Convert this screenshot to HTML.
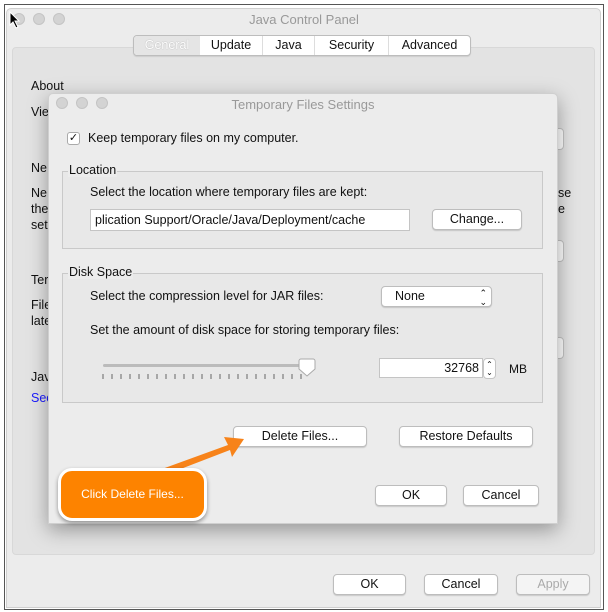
<!DOCTYPE html><html><head><style>
*{box-sizing:border-box;margin:0;padding:0}
body{width:608px;height:612px;background:#fff;font-family:"Liberation Sans",sans-serif;font-size:12.5px;color:#111;position:relative;overflow:hidden}
.a{position:absolute}
.btn{position:absolute;background:#fff;border:1px solid #bdbdbd;border-radius:4px;box-shadow:0 1px 1px rgba(0,0,0,.15);text-align:center;font-size:12.5px;line-height:19px}
.dot{position:absolute;width:12px;height:12px;border-radius:50%;background:#d3d3d3;border:1px solid #c4c4c4}
.grp{position:absolute;border:1px solid #c9c9c9;background:#e8e8e8}
</style></head><body>
<div class="a" style="left:4px;top:4px;width:600px;height:606px;border:1px solid #555;background:#fff"></div>
<div class="a" style="left:6px;top:8px;width:595px;height:600px;background:#ececec;border-radius:5px 5px 0 0;border:1px solid #cfcfcf"></div>
<div class="dot" style="left:13px;top:13px"></div><div class="dot" style="left:33px;top:13px"></div><div class="dot" style="left:53px;top:13px"></div>
<div class="a" style="left:0;width:608px;top:12px;text-align:center;color:#999;font-size:13px">Java Control Panel</div>
<svg class="a" style="left:9px;top:11px" width="12" height="18"><path d="M1 1 L1 14 L4 11 L7 17 L9 16 L6 10 L10 10 Z" fill="#000" stroke="#fff" stroke-width="1"/></svg>
<div class="a" style="left:12px;top:47px;width:583px;height:508px;background:#e3e3e3;border:1px solid #d8d8d8;border-radius:4px"></div>
<div class="a" style="left:133px;top:35px;width:338px;height:21px;background:#fff;border:1px solid #bdbdbd;border-radius:4px;box-shadow:0 1px 1px rgba(0,0,0,.1)"></div>
<div class="a" style="left:134px;top:36px;width:66px;height:19px;background:#e5e5e5;border-radius:3px 0 0 3px;color:#fff;text-align:center;line-height:19px;text-shadow:0 0 1px #999">General</div>
<div class="a" style="left:200px;top:36px;width:63px;line-height:19px;text-align:center;border-right:1px solid #ddd">Update</div>
<div class="a" style="left:263px;top:36px;width:52px;line-height:19px;text-align:center;border-right:1px solid #ddd">Java</div>
<div class="a" style="left:315px;top:36px;width:74px;line-height:19px;text-align:center;border-right:1px solid #ddd">Security</div>
<div class="a" style="left:389px;top:36px;width:81px;line-height:19px;text-align:center">Advanced</div>
<div class="a" style="left:31px;top:79px">About</div>
<div class="a" style="left:31px;top:105px">Vie</div>
<div class="a" style="left:31px;top:161px">Ne</div>
<div class="a" style="left:31px;top:186px">Ne</div>
<div class="a" style="left:31px;top:202px">the</div>
<div class="a" style="left:31px;top:218px">set</div>
<div class="a" style="left:558px;top:186px">se</div>
<div class="a" style="left:558px;top:202px">e</div>
<div class="a" style="left:31px;top:273px">Ter</div>
<div class="a" style="left:31px;top:298px">File</div>
<div class="a" style="left:31px;top:314px">late</div>
<div class="a" style="left:31px;top:370px">Jav</div>
<div class="a" style="left:31px;top:391px;color:#1a1aff">See</div>
<div class="a" style="left:550px;top:128px;width:14px;height:22px;background:#fff;border:1px solid #c4c4c4;border-radius:4px"></div>
<div class="a" style="left:550px;top:240px;width:14px;height:22px;background:#fff;border:1px solid #c4c4c4;border-radius:4px"></div>
<div class="a" style="left:550px;top:337px;width:14px;height:22px;background:#fff;border:1px solid #c4c4c4;border-radius:4px"></div>
<div class="btn" style="left:333px;top:574px;width:73px">OK</div>
<div class="btn" style="left:424px;top:574px;width:74px">Cancel</div>
<div class="btn" style="left:516px;top:574px;width:74px;color:#aaa;background:#f4f4f4">Apply</div>
<div class="a" style="left:48px;top:93px;width:510px;height:431px;background:#ececec;border:1px solid #cfcfcf;border-radius:5px 5px 0 0;box-shadow:0 6px 20px rgba(0,0,0,.35)"></div>
<div class="dot" style="left:56px;top:97px"></div><div class="dot" style="left:76px;top:97px"></div><div class="dot" style="left:96px;top:97px"></div>
<div class="a" style="left:48px;width:510px;top:97px;text-align:center;color:#999;font-size:13px">Temporary Files Settings</div>
<div class="a" style="left:67px;top:132px;width:13px;height:13px;background:#fff;border:1px solid #aaa;border-radius:3px;font-size:11px;line-height:11px;text-align:center">✓</div>
<div class="a" style="left:88px;top:131px">Keep temporary files on my computer.</div>
<div class="grp" style="left:62px;top:171px;width:481px;height:78px"></div>
<div class="a" style="left:68px;top:163px;background:#ececec;padding:0 1px">Location</div>
<div class="a" style="left:90px;top:185px">Select the location where temporary files are kept:</div>
<div class="a" style="left:90px;top:209px;width:320px;height:22px;background:#fff;border:1px solid #c4c4c4;line-height:20px;overflow:hidden;white-space:nowrap;padding-left:4px">plication Support/Oracle/Java/Deployment/cache</div>
<div class="btn" style="left:432px;top:209px;width:90px">Change...</div>
<div class="grp" style="left:62px;top:273px;width:481px;height:130px"></div>
<div class="a" style="left:68px;top:265px;background:#ececec;padding:0 1px">Disk Space</div>
<div class="a" style="left:90px;top:289px">Select the compression level for JAR files:</div>
<div class="btn" style="left:381px;top:286px;width:111px;text-align:left;padding-left:13px">None<span style="position:absolute;right:4px;font-size:9px;line-height:9px;top:2px">⌃<br>⌄</span></div>
<div class="a" style="left:90px;top:323px">Set the amount of disk space for storing temporary files:</div>
<div class="a" style="left:103px;top:364px;width:205px;height:3px;background:#bbb;border-radius:2px"></div>
<svg class="a" style="left:100px;top:358px" width="220" height="24">
<path d="M201 1 h12 a2 2 0 0 1 2 2 v8 l-8 7 l-8 -7 v-8 a2 2 0 0 1 2 -2z" fill="#fff" stroke="#aaa"/>
<g stroke="#666"><path d="M3 16v5M12 16v5M21 16v5M30 16v5M39 16v5M48 16v5M57 16v5M66 16v5M75 16v5M84 16v5M93 16v5M102 16v5M111 16v5M120 16v5M129 16v5M138 16v5M147 16v5M156 16v5M165 16v5M174 16v5M183 16v5M192 16v5M201 16v5"/></g></svg>
<div class="a" style="left:379px;top:358px;width:104px;height:20px;background:#fff;border:1px solid #c4c4c4;text-align:right;padding-right:3px;line-height:18px">32768</div>
<div class="a" style="left:483px;top:358px;width:13px;height:21px;background:#fff;border:1px solid #c4c4c4;border-radius:4px;font-size:8px;line-height:8px;text-align:center;padding-top:2px">⌃<br>⌄</div>
<div class="a" style="left:509px;top:362px;font-size:12px">MB</div>
<div class="btn" style="left:233px;top:426px;width:134px">Delete Files...</div>
<div class="btn" style="left:399px;top:426px;width:134px">Restore Defaults</div>
<div class="btn" style="left:375px;top:485px;width:72px">OK</div>
<div class="btn" style="left:463px;top:485px;width:76px">Cancel</div>
<svg class="a" style="left:150px;top:425px" width="100" height="60"><path d="M12 44 L78 20 L74 12 L94 14 L82 32 L80 25 L15 50 Z" fill="#f7831a"/></svg>
<div class="a" style="left:58px;top:468px;width:149px;height:53px;background:#fd8300;border:3px solid #fff;border-radius:14px;box-shadow:0 2px 4px rgba(0,0,0,.4);color:#fff;font-size:12px;line-height:47px;text-align:center">Click Delete Files...</div>
</body></html>
